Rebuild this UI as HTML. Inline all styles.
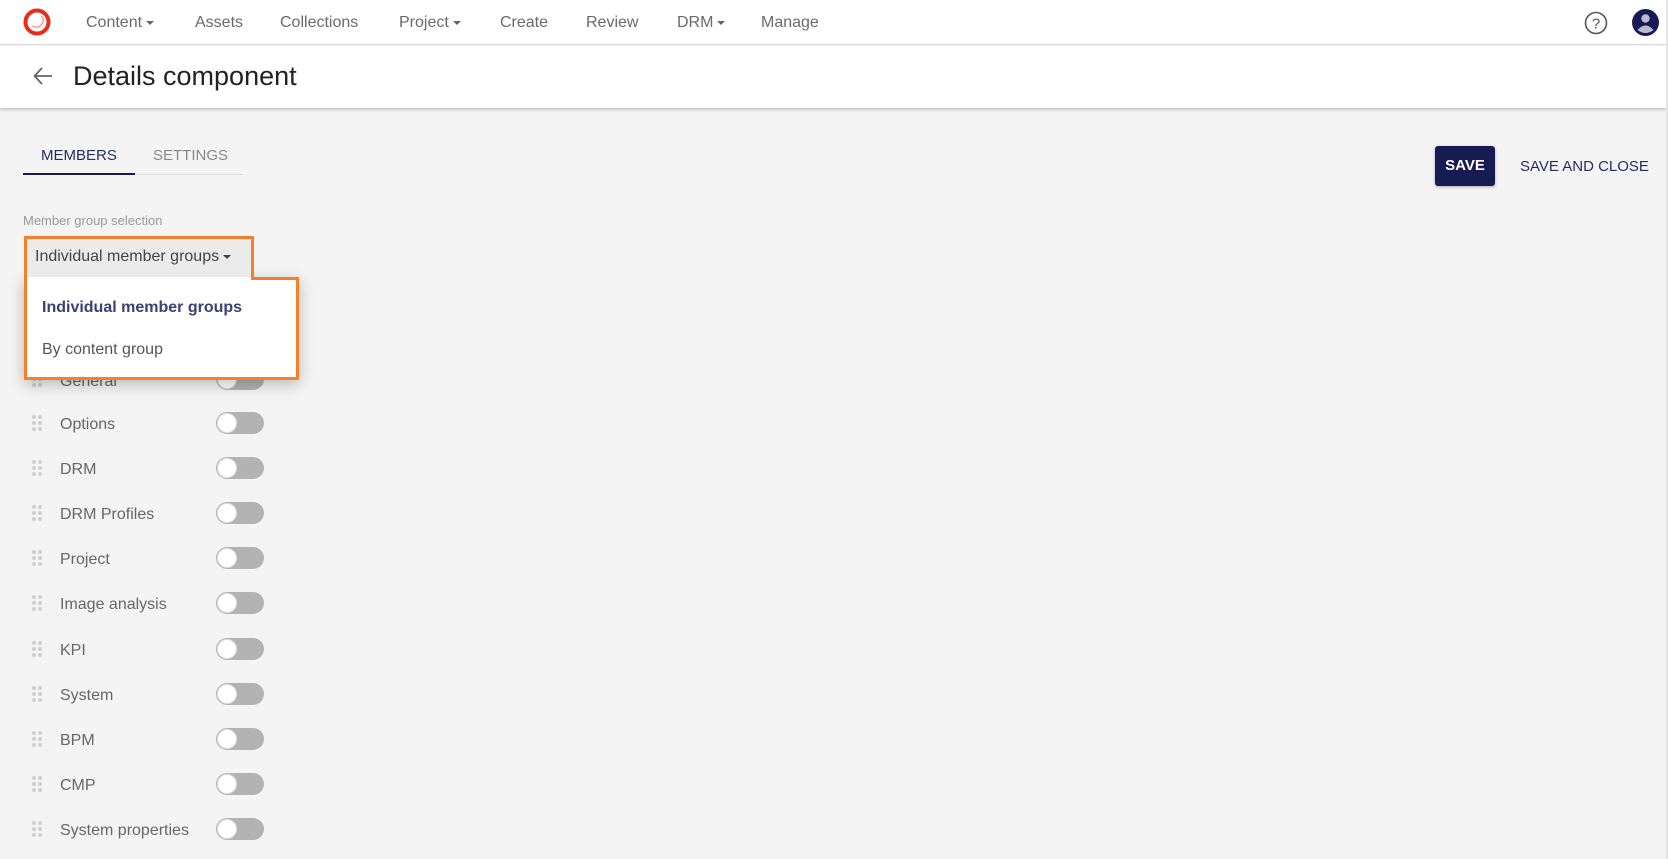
<!DOCTYPE html>
<html><head><meta charset="utf-8"><style>
*{box-sizing:border-box;margin:0;padding:0}
body{width:1668px;height:859px;background:#f4f4f4;font-family:"Liberation Sans",sans-serif;color:#555;position:relative;overflow:hidden}
.abs{position:absolute;white-space:nowrap}
.nav{position:absolute;left:0;top:0;width:1666px;height:45px;background:#fff;border-bottom:1px solid #dcdcdc}
.nav .abs{top:14px;font-size:16px;color:#6a6a6a}
.caret{display:inline-block;width:0;height:0;border-left:4px solid transparent;border-right:4px solid transparent;border-top:4px solid #666;vertical-align:middle;margin-left:4px}
.hdr{position:absolute;left:0;top:46px;width:1666px;height:62px;background:#fff;box-shadow:0 2px 3px rgba(0,0,0,.2)}
.sb{position:absolute;right:0;top:0;width:2px;height:859px;background:#e4e4e4}
.tog{position:absolute;width:48px;height:22px;border-radius:11px;background:#b3b3b3}
.tog:after{content:"";position:absolute;left:1px;top:1px;width:20px;height:20px;border-radius:50%;background:#fff;border:1px solid #ddd;box-sizing:border-box}
.dots{position:absolute;width:10px;height:16px}
.dots i{position:absolute;width:4px;height:4px;border-radius:50%;background:#d0d0d0}
</style></head><body>
<div class="nav">
<svg class="abs" style="left:23px;top:8px" width="28" height="28" viewBox="0 0 28 28"><circle cx="14" cy="14" r="11.5" fill="none" stroke="#ec2a1a" stroke-width="4"/><path d="M9 18 Q16 22 20 14 Q21 10 18 8" fill="none" stroke="#f7a090" stroke-width="1.5"/></svg>
<div class="abs" style="left:86px">Content<span class="caret"></span></div>
<div class="abs" style="left:195px">Assets</div>
<div class="abs" style="left:280px">Collections</div>
<div class="abs" style="left:399px">Project<span class="caret"></span></div>
<div class="abs" style="left:500px">Create</div>
<div class="abs" style="left:586px">Review</div>
<div class="abs" style="left:677px">DRM<span class="caret"></span></div>
<div class="abs" style="left:761px">Manage</div>
<svg class="abs" style="left:1584px;top:11px" width="24" height="24" viewBox="0 0 24 24"><circle cx="12" cy="12" r="10.5" fill="none" stroke="#555" stroke-width="1.6"/><text x="12" y="17.5" text-anchor="middle" font-size="15" font-family="Liberation Sans" fill="#555">?</text></svg>
<svg class="abs" style="left:1632px;top:9px" width="27" height="27" viewBox="0 0 27 27"><circle cx="13.5" cy="13.5" r="13.5" fill="#171b52"/><circle cx="13.5" cy="9.5" r="4.2" fill="#b9bcd0"/><path d="M5.5 21 Q13.5 12 21.5 21 Q13.5 27 5.5 21Z" fill="#b9bcd0"/></svg>
</div>
<div class="hdr">
<svg class="abs" style="left:33px;top:21px" width="20" height="18" viewBox="0 0 20 18"><path d="M19 9H2M9 1L1.5 9L9 17" fill="none" stroke="#666" stroke-width="1.8"/></svg>
<div class="abs" style="left:73px;top:15px;font-size:27px;color:#222">Details component</div>
</div>
<div class="abs" style="left:41px;top:147px;font-size:15px;color:#272b63">MEMBERS</div>
<div class="abs" style="left:153px;top:147px;font-size:15px;color:#888">SETTINGS</div>
<div class="abs" style="left:23px;top:174px;width:220px;height:1px;background:#ddd"></div>
<div class="abs" style="left:23px;top:173px;width:112px;height:2px;background:#171b52"></div>
<div class="abs" style="left:1435px;top:146px;width:60px;height:40px;background:#171b52;border-radius:3px;color:#fff;font-weight:bold;font-size:15px;text-align:center;line-height:40px;box-shadow:0 1px 3px rgba(0,0,0,.3)">SAVE</div>
<div class="abs" style="left:1520px;top:158px;font-size:15px;color:#272b63">SAVE AND CLOSE</div>
<div class="abs" style="left:23px;top:213px;font-size:13px;color:#999">Member group selection</div>

<div class="dots" style="left:32px;top:371px"><i style="left:0;top:0"></i><i style="left:6px;top:0"></i><i style="left:0;top:6px"></i><i style="left:6px;top:6px"></i><i style="left:0;top:12px"></i><i style="left:6px;top:12px"></i></div>
<div class="abs" style="left:60px;top:373px;font-size:16px;color:#666">General</div><div class="tog" style="left:216px;top:368px"></div>
<div id="rows"></div>

<div class="abs" style="left:24px;top:277px;width:275px;height:103px;background:#fff;border:3px solid #f57f2a;box-shadow:0 4px 14px rgba(0,0,0,.25)">
<div class="abs" style="left:15px;top:19px;font-size:16px;font-weight:bold;color:#3b3f73">Individual member groups</div>
<div class="abs" style="left:15px;top:61px;font-size:16px;color:#555">By content group</div>
</div>
<div class="abs" style="left:24px;top:236px;width:230px;height:43px;background:#ebebeb;border:3px solid #f57f2a;border-bottom:none"></div>
<div class="abs" style="left:27px;top:277px;width:224px;height:3px;background:#fff"></div>
<div class="abs" style="left:35px;top:248px;font-size:16px;color:#444">Individual member groups<span class="caret" style="border-top-color:#444"></span></div>

<script>
var n=["Options","DRM","DRM Profiles","Project","Image analysis","KPI","System","BPM","CMP","System properties"],h="";
n.forEach(function(t,i){var c=423+i*45.1;h+='<div class="dots" style="left:32px;top:'+(c-8)+'px"><i style="left:0;top:0"></i><i style="left:6px;top:0"></i><i style="left:0;top:6px"></i><i style="left:6px;top:6px"></i><i style="left:0;top:12px"></i><i style="left:6px;top:12px"></i></div><div class="abs" style="left:60px;top:'+(c-7)+'px;font-size:16px;color:#666">'+t+'</div><div class="tog" style="left:216px;top:'+(c-11)+'px"></div>';});
document.getElementById("rows").innerHTML=h;
</script>
<div class="sb"></div>
</body></html>
